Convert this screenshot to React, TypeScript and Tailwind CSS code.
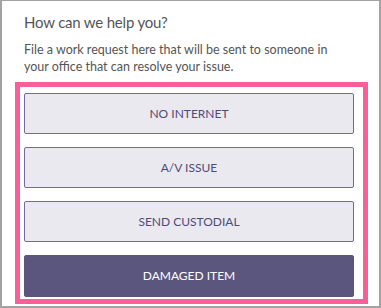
const options = [
  { label: "NO INTERNET", active: false },
  { label: "A/V ISSUE", active: false },
  { label: "SEND CUSTODIAL", active: false },
  { label: "DAMAGED ITEM", active: true },
];

export default function App() {
  return (
    <main
      className="h-[308px] w-[381px] overflow-hidden border-x-2 border-t border-b-2 border-[#a3a3a3] bg-white"
      style={{ fontFamily: "Lato, 'Noto Sans', sans-serif" }}
    >
      <h1 className="pl-[22px] pt-[11px] text-[15px] leading-[20px] tracking-[-0.2px] text-[#555555]">
        How can we help you?
      </h1>
      <p className="mt-[9px] pl-[22px] pr-[30px] text-[12.5px] leading-[17px] text-[#555555]">
        File a work request here that will be sent to someone in your office that can resolve your issue.
      </p>
      <div className="ml-[13px] mr-[11px] mt-[7px] flex flex-col gap-[13px] border-[5px] border-[#fb5f98] pb-[2px] pl-[4px] pr-[9px] pt-[6px]">
        {options.map((option) => (
          <button
            key={option.label}
            className={
              option.active
                ? "flex h-[42px] items-center justify-center rounded-[2px] border border-[#5a567e] bg-[#5a567e] text-[12px] text-white"
                : "flex h-[41px] items-center justify-center rounded-[2px] border border-[#716c99] bg-[#eae9ef] text-[12px] text-[#4f4a78]"
            }
          >
            {option.label}
          </button>
        ))}
      </div>
    </main>
  );
}
